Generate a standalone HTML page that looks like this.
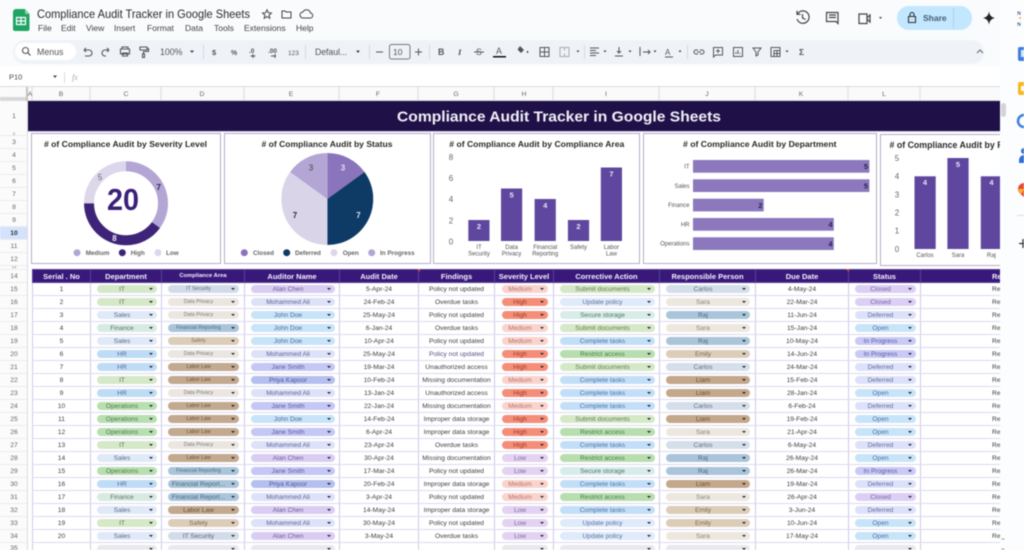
<!DOCTYPE html>
<html><head><meta charset="utf-8"><title>Compliance Audit Tracker in Google Sheets</title>
<style>
html,body{margin:0;padding:0;width:1024px;height:550px;overflow:hidden;background:#fff;font-family:"Liberation Sans",sans-serif}
#r{position:absolute;left:0;top:0;width:1024px;height:550px;overflow:hidden;filter:blur(.5px);background:#fff}
svg{position:absolute;left:0;top:0}
#top{position:absolute;left:0;top:0;width:1024px;height:66px;background:#f9fbfd}
#fx{position:absolute;left:0;top:66px;width:1000px;height:21px;background:#fff}
#ban{position:absolute;left:28px;top:101px;width:972px;height:30px;background:#1f1147}
table{position:absolute;left:32px;top:269px;border-collapse:collapse;table-layout:fixed;width:968px}
tr{height:13px}
td{padding:0;border:1px solid #dedaf0;border-left-color:#cfc9e8;border-right-color:#cfc9e8;font-size:6.7px;line-height:11px;height:12px;text-align:center;overflow:hidden;white-space:nowrap;color:#3f3f3f;box-sizing:border-box}
tr:first-child td{background:#38197a;color:#f4f0ff;font-weight:bold;font-size:7.5px;border-color:#5a3f96}
td:last-child{text-align:left;padding-left:71px}
.p{display:block;position:relative;height:8.5px;line-height:9px;border-radius:4.25px;padding-right:10px;box-sizing:border-box;font-style:normal;overflow:hidden;font-size:6.6px}
.p::after{content:"";position:absolute;right:4.5px;top:3px;border-left:2px solid transparent;border-right:2px solid transparent;border-top:2.6px solid #223}
td:nth-child(2) .p{margin-left:6px;width:60px}
td:nth-child(3) .p{margin-left:6px;width:71px;font-size:5.2px;line-height:9.5px}
td:nth-child(3) .l{font-size:6.6px;line-height:9px}
td:nth-child(4) .p{margin-left:6px;width:84px}
td:nth-child(7) .p{margin-left:7px;width:46px}
td:nth-child(8) .p{margin-left:6px;width:95px}
td:nth-child(9) .p{margin-left:6px;width:84px}
td:nth-child(11) .p{margin-left:6px;width:61px}
.a1{background:#d5e8c8;color:#64775a}.a2{background:#dfe9f8;color:#5b6a85}.a3{background:#d8ebe3;color:#5f7268}.a4{background:#bfdcf6;color:#52709a}.a5{background:#b7dfb0;color:#557a55}
.b1{background:#d2dce8;color:#5d6878}.b2{background:#ebe7e0;color:#777}.b3{background:#aac5da;color:#4f6a80}.b4{background:#dccdb9;color:#7c6c58}.b5{background:#c2a98f;color:#6a543e}
.c1{background:#dacdf4;color:#6c5c96}.c2{background:#dde2f8;color:#5f6896}.c3{background:#c8e4f8;color:#4f6c96}.c4{background:#c5c7f4;color:#5b5c9c}.c5{background:#b5c0ee;color:#4f5a96}
.d1{background:#fad3cd;color:#b5766c}.d2{background:#f58e78;color:#a03c28}.d3{background:#e3d2f2;color:#7c6a9c}
.e1{background:#d5e8c8;color:#64804f}.e2{background:#dfeafa;color:#5b72a0}.e3{background:#d8ecea;color:#4f7468}.e4{background:#c3dff8;color:#4f72a4}.e5{background:#b8deb0;color:#4c7c4c}
.f1{background:#d4dfe9;color:#62707e}.f2{background:#ece8e0;color:#8a8578}.f3{background:#aac5da;color:#4f6a80}.f4{background:#dccdb9;color:#7c6c58}.f5{background:#c4a88c;color:#6a543e}
.g1{background:#dccff5;color:#7464a4}.g2{background:#dde2fa;color:#5f6a9c}.g3{background:#c8e4f8;color:#4f72a4}.g4{background:#c9caf5;color:#5b5ca4}
.z{background:#e8e9ec}
#side{position:absolute;left:1000px;top:0;width:24px;height:550px;background:#fcfdfe}
</style></head><body><div id="r">
<div id="top"></div><div id="fx"></div>

<svg width="1024" height="550" viewBox="0 0 1024 550" font-family="'Liberation Sans',sans-serif">
<rect x="0" y="86" width="1000" height="15" fill="#fafafa"/>
<rect x="0" y="101" width="28" height="449" fill="#fbfbfb"/>
<rect x="0" y="226" width="28" height="13" fill="#d3e3fd"/>
<path d="M0 86.500H1000M0 100.500H1000M27.500 87V550M32 87V101M90 87V101M161 87V101M244 87V101M339 87V101M418 87V101M494 87V101M553 87V101M659 87V101M755 87V101M848 87V101M920 87V101" stroke="#dcdcdc" stroke-width="1" fill="none"/>
<rect x="0" y="97" width="27" height="3" fill="#d8d8d8"/><rect x="26" y="87" width="2" height="14" fill="#c4c4c4"/>
<g font-size="6.800" fill="#666" text-anchor="middle">
<text x="30" y="96">A</text><text x="61" y="96">B</text><text x="126" y="96">C</text><text x="202" y="96">D</text><text x="291" y="96">E</text><text x="378" y="96">F</text><text x="456" y="96">G</text><text x="524" y="96">H</text><text x="606" y="96">I</text><text x="707" y="96">J</text><text x="801" y="96">K</text><text x="884" y="96">L</text>
<text x="14" y="118">1</text><text x="14" y="135" font-size="4">2</text>
<text x="14" y="144">3</text><text x="14" y="157">4</text><text x="14" y="170">5</text><text x="14" y="183">6</text><text x="14" y="196">7</text><text x="14" y="209">8</text><text x="14" y="222">9</text><text x="14" y="235" font-weight="bold" fill="#333">10</text><text x="14" y="248">11</text><text x="14" y="261">12</text><text x="14" y="268" font-size="4">13</text>
<text x="14" y="278">14</text><text x="14" y="291">15</text><text x="14" y="304">16</text><text x="14" y="317">17</text><text x="14" y="330">18</text><text x="14" y="343">19</text><text x="14" y="356">20</text><text x="14" y="369">21</text><text x="14" y="382">22</text><text x="14" y="395">23</text><text x="14" y="408">24</text><text x="14" y="421">25</text><text x="14" y="434">26</text><text x="14" y="447">27</text><text x="14" y="460">28</text><text x="14" y="473">29</text><text x="14" y="486">30</text><text x="14" y="499">31</text><text x="14" y="512">32</text><text x="14" y="525">33</text><text x="14" y="538">34</text><text x="14" y="550">35</text>
</g>
<path d="M0 135.500H27M0 148.500H27M0 161.500H27M0 174.500H27M0 187.500H27M0 200.500H27M0 213.500H27M0 226.500H27M0 239.500H27M0 252.500H27M0 265.500H27M0 269.500H27M0 282.500H27M0 295.500H27M0 308.500H27M0 321.500H27M0 334.500H27M0 347.500H27M0 360.500H27M0 373.500H27M0 386.500H27M0 399.500H27M0 412.500H27M0 425.500H27M0 438.500H27M0 451.500H27M0 464.500H27M0 477.500H27M0 490.500H27M0 503.500H27M0 516.500H27M0 529.500H27M0 542.500H27" stroke="#ececec" fill="none"/>
</svg>

<div id="ban"></div>

<table>
<colgroup><col style="width:58px"><col style="width:71px"><col style="width:83px"><col style="width:95px"><col style="width:79px"><col style="width:76px"><col style="width:59px"><col style="width:106px"><col style="width:96px"><col style="width:93px"><col style="width:72px"><col style="width:80px"></colgroup>
<tr><td>Serial . No</td><td>Department</td><td style="font-size:5.8px">Compliance Area</td><td>Auditor Name</td><td>Audit Date</td><td>Findings</td><td>Severity Level</td><td>Corrective Action</td><td>Responsible Person</td><td>Due Date</td><td>Status</td><td>Re</td></tr>
<tr><td>1</td><td><i class="p a1">IT</i></td><td><i class="p b1">IT Security</i></td><td><i class="p c1">Alan Chen</i></td><td>5-Apr-24</td><td>Policy not updated</td><td><i class="p d1">Medium</i></td><td><i class="p e1">Submit documents</i></td><td><i class="p f1">Carlos</i></td><td>4-May-24</td><td><i class="p g1">Closed</i></td><td>Re</td></tr>
<tr><td>2</td><td><i class="p a1">IT</i></td><td><i class="p b2">Data Privacy</i></td><td><i class="p c2">Mohammed Ali</i></td><td>24-Feb-24</td><td>Overdue tasks</td><td><i class="p d2">High</i></td><td><i class="p e2">Update policy</i></td><td><i class="p f2">Sara</i></td><td>22-Mar-24</td><td><i class="p g1">Closed</i></td><td>Re</td></tr>
<tr><td>3</td><td><i class="p a2">Sales</i></td><td><i class="p b2">Data Privacy</i></td><td><i class="p c3">John Doe</i></td><td>25-May-24</td><td>Policy not updated</td><td><i class="p d2">High</i></td><td><i class="p e3">Secure storage</i></td><td><i class="p f3">Raj</i></td><td>11-Jun-24</td><td><i class="p g2">Deferred</i></td><td>Re</td></tr>
<tr><td>4</td><td><i class="p a3">Finance</i></td><td><i class="p b3">Financial Reporting</i></td><td><i class="p c3">John Doe</i></td><td>6-Jan-24</td><td>Overdue tasks</td><td><i class="p d1">Medium</i></td><td><i class="p e1">Submit documents</i></td><td><i class="p f2">Sara</i></td><td>15-Jan-24</td><td><i class="p g3">Open</i></td><td>Re</td></tr>
<tr><td>5</td><td><i class="p a2">Sales</i></td><td><i class="p b4">Safety</i></td><td><i class="p c3">John Doe</i></td><td>10-Apr-24</td><td>Policy not updated</td><td><i class="p d1">Medium</i></td><td><i class="p e4">Complete tasks</i></td><td><i class="p f3">Raj</i></td><td>10-May-24</td><td><i class="p g4">In Progress</i></td><td>Re</td></tr>
<tr><td>6</td><td><i class="p a4">HR</i></td><td><i class="p b2">Data Privacy</i></td><td><i class="p c2">Mohammed Ali</i></td><td>25-May-24</td><td style="color:#5c4f86">Policy not updated</td><td><i class="p d2">High</i></td><td><i class="p e5">Restrict access</i></td><td><i class="p f4">Emily</i></td><td>14-Jun-24</td><td><i class="p g4">In Progress</i></td><td>Re</td></tr>
<tr><td>7</td><td><i class="p a4">HR</i></td><td><i class="p b5">Labor Law</i></td><td><i class="p c4">Jane Smith</i></td><td>19-Mar-24</td><td>Unauthorized access</td><td><i class="p d2">High</i></td><td><i class="p e1">Submit documents</i></td><td><i class="p f1">Carlos</i></td><td>24-Mar-24</td><td><i class="p g2">Deferred</i></td><td>Re</td></tr>
<tr><td>8</td><td><i class="p a1">IT</i></td><td><i class="p b5">Labor Law</i></td><td><i class="p c5">Priya Kapoor</i></td><td>10-Feb-24</td><td>Missing documentation</td><td><i class="p d1">Medium</i></td><td><i class="p e4">Complete tasks</i></td><td><i class="p f5">Liam</i></td><td>15-Feb-24</td><td><i class="p g2">Deferred</i></td><td>Re</td></tr>
<tr><td>9</td><td><i class="p a4">HR</i></td><td><i class="p b2">Data Privacy</i></td><td><i class="p c2">Mohammed Ali</i></td><td>13-Jan-24</td><td>Unauthorized access</td><td><i class="p d2">High</i></td><td><i class="p e4">Complete tasks</i></td><td><i class="p f5">Liam</i></td><td>28-Jan-24</td><td><i class="p g3">Open</i></td><td>Re</td></tr>
<tr><td>10</td><td><i class="p a5">Operations</i></td><td><i class="p b5">Labor Law</i></td><td><i class="p c4">Jane Smith</i></td><td>22-Jan-24</td><td>Missing documentation</td><td><i class="p d1">Medium</i></td><td><i class="p e4">Complete tasks</i></td><td><i class="p f1">Carlos</i></td><td>6-Feb-24</td><td><i class="p g2">Deferred</i></td><td>Re</td></tr>
<tr><td>11</td><td><i class="p a5">Operations</i></td><td><i class="p b5">Labor Law</i></td><td><i class="p c3">John Doe</i></td><td>14-Feb-24</td><td>Improper data storage</td><td><i class="p d2">High</i></td><td><i class="p e1">Submit documents</i></td><td><i class="p f5">Liam</i></td><td>19-Feb-24</td><td><i class="p g3">Open</i></td><td>Re</td></tr>
<tr><td>12</td><td><i class="p a5">Operations</i></td><td><i class="p b5">Labor Law</i></td><td><i class="p c4">Jane Smith</i></td><td>6-Apr-24</td><td>Improper data storage</td><td><i class="p d2">High</i></td><td><i class="p e5">Restrict access</i></td><td><i class="p f2">Sara</i></td><td>21-Apr-24</td><td><i class="p g3">Open</i></td><td>Re</td></tr>
<tr><td>13</td><td><i class="p a1">IT</i></td><td><i class="p b2">Data Privacy</i></td><td><i class="p c2">Mohammed Ali</i></td><td>23-Apr-24</td><td>Overdue tasks</td><td><i class="p d2">High</i></td><td><i class="p e4">Complete tasks</i></td><td><i class="p f1">Carlos</i></td><td>6-May-24</td><td><i class="p g2">Deferred</i></td><td>Re</td></tr>
<tr><td>14</td><td><i class="p a2">Sales</i></td><td><i class="p b5">Labor Law</i></td><td><i class="p c1">Alan Chen</i></td><td>30-Apr-24</td><td>Missing documentation</td><td><i class="p d3">Low</i></td><td><i class="p e5">Restrict access</i></td><td><i class="p f3">Raj</i></td><td>26-May-24</td><td><i class="p g3">Open</i></td><td>Re</td></tr>
<tr><td>15</td><td><i class="p a5">Operations</i></td><td><i class="p b3">Financial Reporting</i></td><td><i class="p c4">Jane Smith</i></td><td>17-Mar-24</td><td>Policy not updated</td><td><i class="p d3">Low</i></td><td><i class="p e3">Secure storage</i></td><td><i class="p f3">Raj</i></td><td>26-Mar-24</td><td><i class="p g4">In Progress</i></td><td>Re</td></tr>
<tr><td>16</td><td><i class="p a4">HR</i></td><td><i class="p b3 l">Financial Report...</i></td><td><i class="p c5">Priya Kapoor</i></td><td>20-Feb-24</td><td>Improper data storage</td><td><i class="p d1">Medium</i></td><td><i class="p e4">Complete tasks</i></td><td><i class="p f5">Liam</i></td><td>19-Mar-24</td><td><i class="p g2">Deferred</i></td><td>Re</td></tr>
<tr><td>17</td><td><i class="p a3">Finance</i></td><td><i class="p b3 l">Financial Report...</i></td><td><i class="p c2">Mohammed Ali</i></td><td>3-Apr-24</td><td>Policy not updated</td><td><i class="p d1">Medium</i></td><td><i class="p e5">Restrict access</i></td><td><i class="p f2">Sara</i></td><td>26-Apr-24</td><td><i class="p g1">Closed</i></td><td>Re</td></tr>
<tr><td>18</td><td><i class="p a2">Sales</i></td><td><i class="p b5 l">Labor Law</i></td><td><i class="p c1">Alan Chen</i></td><td>14-May-24</td><td>Improper data storage</td><td><i class="p d3">Low</i></td><td><i class="p e4">Complete tasks</i></td><td><i class="p f4">Emily</i></td><td>3-Jun-24</td><td><i class="p g2">Deferred</i></td><td>Re</td></tr>
<tr><td>19</td><td><i class="p a1">IT</i></td><td><i class="p b4 l">Safety</i></td><td><i class="p c2">Mohammed Ali</i></td><td>30-May-24</td><td>Policy not updated</td><td><i class="p d3">Low</i></td><td><i class="p e2">Update policy</i></td><td><i class="p f4">Emily</i></td><td>10-Jun-24</td><td><i class="p g3">Open</i></td><td>Re</td></tr>
<tr><td>20</td><td><i class="p a2">Sales</i></td><td><i class="p b1 l">IT Security</i></td><td><i class="p c1">Alan Chen</i></td><td>3-May-24</td><td>Overdue tasks</td><td><i class="p d3">Low</i></td><td><i class="p e2">Update policy</i></td><td><i class="p f2">Sara</i></td><td>17-May-24</td><td><i class="p g3">Open</i></td><td>Re</td></tr>
<tr><td></td><td><i class="p z"></i></td><td><i class="p z"></i></td><td><i class="p z"></i></td><td></td><td></td><td><i class="p z"></i></td><td><i class="p z"></i></td><td><i class="p z"></i></td><td></td><td><i class="p z"></i></td><td></td></tr>
</table>

<svg width="1024" height="550" viewBox="0 0 1024 550" font-family="'Liberation Sans',sans-serif">
<path d="M13 12a3 3 0 0 1 3-3h9l4.500 5v15a2 2 0 0 1-2 2H15a2 2 0 0 1-2-2z" fill="#1fa463"/>
<path d="M25 9l4.500 5H25z" fill="#8fd0ae"/>
<path d="M16.500 17.500h9v7h-9zM16.500 21h9M21 17.500v7" fill="none" stroke="#fff" stroke-width="1.200"/>
<text x="37" y="18" font-size="12" fill="#2b2b2b" textLength="213" lengthAdjust="spacingAndGlyphs">Compliance Audit Tracker in Google Sheets</text>
<path d="M267 9.800l1.300 2.900 3.100.3-2.300 2.100.7 3.100-2.800-1.600-2.800 1.600.7-3.100-2.300-2.100 3.100-.3z" fill="none" stroke="#444" stroke-width="1"/>
<path d="M282 11h3l1 1h5v6h-9z" fill="none" stroke="#444" stroke-width="1"/>
<path d="M303 18h7a2.500 2.500 0 0 0 .5-5 4 4 0 0 0-7.500-1 3 3 0 0 0 0 6z" fill="none" stroke="#444" stroke-width="1"/>
<g font-size="8.500" fill="#444"><text x="38" y="31">File</text><text x="61" y="31">Edit</text><text x="86" y="31">View</text><text x="114" y="31">Insert</text><text x="147" y="31">Format</text><text x="185" y="31">Data</text><text x="214" y="31">Tools</text><text x="244" y="31">Extensions</text><text x="296" y="31">Help</text></g>
<rect x="13" y="40" width="971" height="24" rx="12" fill="#eff3f8"/>
<rect x="15" y="43" width="61" height="17" rx="8.500" fill="#fff"/>
<circle cx="25.500" cy="50.500" r="3" fill="none" stroke="#555" stroke-width="1.100"/><path d="M27.800 52.800l2.700 2.700" stroke="#555" stroke-width="1.200"/>
<g font-size="8.800" fill="#555">
<text x="37" y="55">Menus</text>
<text x="160" y="55">100%</text>
<text x="315" y="55" textLength="32">Defaul...</text>
<text x="393" y="55" font-size="8.500">10</text>
<text x="212" y="55" font-weight="bold" font-size="7.500">$</text>
<text x="231" y="55" font-weight="bold" font-size="7">%</text>
<text x="249" y="53" font-weight="bold" font-size="6.500">.0</text>
<text x="268" y="53" font-weight="bold" font-size="6.500">.00</text>
<text x="288" y="55" font-size="6.500">123</text>
<text x="438" y="55" font-weight="bold">B</text>
<text x="458" y="55" font-style="italic" font-weight="bold" font-family="'Liberation Serif',serif">I</text>
<text x="476" y="55">S</text>
<text x="496" y="54">A</text>
<text x="799" y="55" font-size="8.500" font-weight="bold">Σ</text>
</g>
<path d="M474 52h10" stroke="#555"/><rect x="493" y="56" width="13" height="1.500" fill="#111"/>
<path d="M84 50h5a3 3 0 0 1 0 6h-4M84 50l2-2M84 50l2 2" fill="none" stroke="#555" stroke-width="1.100"/>
<path d="M109 50h-4a3 3 0 0 0 0 6h1M109 50l-2-2M109 50l-2 2" fill="none" stroke="#555" stroke-width="1.100"/>
<path d="M122 49v-2h6v2M120.500 49h9v5h-9zM122.500 53h5v3h-5z" fill="none" stroke="#555" stroke-width="1.100"/>
<path d="M140 47h7v3h-7zM147 48.500h1.500v3h-5v2M142.500 54h2v3.500h-2z" fill="none" stroke="#555" stroke-width="1.100"/>
<path d="M190 50.500h4l-2 2.500zM356 50.500h4l-2 2.500zM961 16.500h4l-2 2.500zM53 75.500h4l-2 2.500zM879 17h3l-1.500 2zM576.500 50.500h3l-1.500 2zM603.500 50.500h3l-1.500 2zM628.500 50.500h3l-1.500 2zM653.500 50.500h3l-1.500 2zM678.500 50.500h3l-1.500 2zM785.500 50.500h3l-1.500 2z" fill="#444"/>
<path d="M203.500 45v14M305.500 45v14M369.500 45v14M429.500 45v14M584.500 45v14M687.500 45v14" stroke="#d6dae0"/>
<rect x="389.500" y="44.500" width="20.500" height="14.500" rx="2" fill="none" stroke="#777"/>
<path d="M376 52h7M415 52h7M418.500 48.500v7M250.500 56h5M253 54v4M271 56h5M275 54v4" stroke="#555" stroke-width="1"/>
<path d="M520 46l4 4-3 3-3.500-3.500zM526.500 52a1 1 0 0 0 2 0l-1-1.500z" fill="#555"/>
<path d="M540 47.500h9v9h-9zM544.500 47.500v9M540 52h9" fill="none" stroke="#555"/>
<path d="M560 47.500h9v9h-9zM564.500 47.500v3M564.500 53.500v3" fill="none" stroke="#aaa"/>
<path d="M590 48h9M590 50.500h6M590 53h9M590 55.500h6" stroke="#555"/>
<path d="M615 56h8M619 47v6M617 51l2 2 2-2" fill="none" stroke="#555"/>
<path d="M640 47v9M643 52h7M648 50l2 2-2 2" fill="none" stroke="#555"/>
<text x="665" y="55" font-size="8" fill="#555">A</text><path d="M665 57h8" stroke="#555"/>
<path d="M698 50h-2a2 2 0 0 0 0 4h2M700 50h2a2 2 0 0 1 0 4h-2M697 52h4" fill="none" stroke="#555"/>
<path d="M713.500 47.500h9v7.500h-7l-2 2zM718 49v4M716 51h4" fill="none" stroke="#555"/>
<path d="M733.500 47.500h9v9h-9zM736 54v-2M738 54v-4M740 54v-1" fill="none" stroke="#555"/>
<path d="M753 48h8l-3 4v3l-2 1v-4z" fill="none" stroke="#555"/>
<path d="M771 47.500h9v9h-9zM774 50.500h6M774 53.500h6M774 50.500v6M777 50.500v6" fill="none" stroke="#555"/>
<path d="M977 53l3-3 3 3" fill="none" stroke="#666"/>
<path d="M797.500 14a6.200 6.200 0 1 1-.500 5M797 10.800v3.500h3.500M802.500 14v4l3 1.500" fill="none" stroke="#444" stroke-width="1.200"/>
<path d="M826.500 12.500h11.500v11l-2-2h-9.500zM829 15h7M829 17.500h7" fill="none" stroke="#444" stroke-width="1.200"/>
<path d="M859 14h8v9.500h-8zM867 18l3-3v7l-3-3z" fill="none" stroke="#444" stroke-width="1.200"/>
<rect x="897" y="6" width="75" height="24" rx="12" fill="#c2e7ff"/>
<path d="M953.500 8v20" stroke="#a9d4ef"/>
<path d="M908.500 16.500h7v6h-7zM910 16.500v-2a2 2 0 0 1 4 0v2" fill="none" stroke="#333" stroke-width="1.100"/>
<text x="923" y="21" font-size="8.500" fill="#2f4558" font-weight="bold" opacity=".85">Share</text>
<path d="M989 11.500c.8 4 2 5.500 6 6.500-4 1-5.200 2.500-6 6.500-.8-4-2-5.500-6-6.500 4-1 5.200-2.500 6-6.500z" fill="#222"/>
<text x="9" y="79.500" font-size="7.500" fill="#444">P10</text><path d="M64.500 72v11" stroke="#ddd"/>
<text x="72" y="80" font-size="8" font-style="italic" fill="#aaa" font-family="'Liberation Serif',serif">fx</text>
<text x="397" y="121.500" font-size="15" font-weight="bold" fill="#f2f0f8" textLength="324" lengthAdjust="spacingAndGlyphs">Compliance Audit Tracker in Google Sheets</text>
<rect x="28" y="131" width="972" height="138" fill="#fff"/>
<path d="M28 131.500H1000" stroke="#cfc9e6"/>
<path d="M417 269l3 0v3z" fill="#e0533f"/><path d="M846 269h3v3z" fill="#e0533f"/>
<g fill="#fff" stroke="#b3adcc" stroke-width="1">
<rect x="31.500" y="133.500" width="189" height="130"/><rect x="224.500" y="133.500" width="206" height="130"/><rect x="433.500" y="133.500" width="206" height="130"/><rect x="643.500" y="133.500" width="233" height="130"/><rect x="880.500" y="134.500" width="130" height="131"/>
</g>
<g font-size="8.500" font-weight="bold" fill="#2a2a2a">
<text x="44" y="147" textLength="163" lengthAdjust="spacingAndGlyphs"># of Compliance Audit by Severity Level</text>
<text x="261.500" y="147" textLength="131" lengthAdjust="spacingAndGlyphs"># of Compliance Audit by Status</text>
<text x="449.300" y="147" textLength="175" lengthAdjust="spacingAndGlyphs"># of Compliance Audit by Compliance Area</text>
<text x="683" y="147" textLength="153.500" lengthAdjust="spacingAndGlyphs"># of Compliance Audit by Department</text>
<text x="889.500" y="148" font-size="8.800"># of Compliance Audit by Responsible Person</text>
</g>
<g fill="none" stroke-width="10" transform="rotate(-90 126 203.300)">
<circle cx="126" cy="203.300" r="37" pathLength="20" stroke="#b3a5d4" stroke-dasharray="7 13"/>
<circle cx="126" cy="203.300" r="37" pathLength="20" stroke="#3d2478" stroke-dasharray="8 12" stroke-dashoffset="-7"/>
<circle cx="126" cy="203.300" r="37" pathLength="20" stroke="#dcd7ea" stroke-dasharray="5 15" stroke-dashoffset="-15"/>
</g>
<text x="107" y="210" font-size="31" font-weight="bold" fill="#3a2078" textLength="32" lengthAdjust="spacingAndGlyphs">20</text>
<g font-size="8" text-anchor="middle"><text x="158.700" y="190" font-weight="bold" fill="#2a2a4a">7</text><text x="114.500" y="241" font-weight="bold" fill="#eee">8</text><text x="100" y="180" fill="#666">5</text></g>
<g font-size="6.300" font-weight="bold" fill="#666">
<circle cx="77" cy="252.700" r="3.500" fill="#b3a5d4"/><text x="85.700" y="255">Medium</text>
<circle cx="122.300" cy="252.700" r="3.500" fill="#3d2478"/><text x="130.700" y="255">High</text>
<circle cx="158" cy="252.700" r="3.500" fill="#dcd7ea"/><text x="166" y="255">Low</text>
<circle cx="244.300" cy="252.700" r="3.500" fill="#8a74bb"/><text x="253" y="255">Closed</text>
<circle cx="286.700" cy="252.700" r="3.500" fill="#0e3a66"/><text x="295" y="255">Deferred</text>
<circle cx="334" cy="252.700" r="3.500" fill="#dcd7ea"/><text x="342.700" y="255">Open</text>
<circle cx="371.700" cy="252.700" r="3.500" fill="#b3a5d4"/><text x="380" y="255">In Progress</text>
</g>
<path d="M327.300 199V153A46 46 0 0 1 364.500 172z" fill="#8a74bb"/>
<path d="M327.300 199L364.500 172A46 46 0 0 1 327.300 245z" fill="#0e3a66"/>
<path d="M327.300 199V245A46 46 0 0 1 290.100 172z" fill="#d9d4e8"/>
<path d="M327.300 199L290.100 172A46 46 0 0 1 327.300 153z" fill="#b3a5d4"/>
<g font-size="8" text-anchor="middle"><text x="343" y="170.500" font-weight="bold" fill="#e8e0f5">3</text><text x="358.500" y="218" font-weight="bold" fill="#dfe4ee">7</text><text x="295" y="218" font-weight="bold" fill="#2a2a3a">7</text><text x="311" y="170.500" fill="#444">3</text></g>
<g fill="#5f479f">
<rect x="468.300" y="220" width="21.200" height="21"/><rect x="501" y="188.500" width="21.200" height="52.500"/><rect x="534.600" y="199" width="21.200" height="42"/><rect x="567.900" y="220" width="21.200" height="21"/><rect x="600.800" y="167.500" width="21.200" height="73.500"/>
</g>
<g font-size="7.500" font-weight="bold" fill="#eae4f6" text-anchor="middle"><text x="479" y="229">2</text><text x="511.600" y="197.500">5</text><text x="545.200" y="208">4</text><text x="578.500" y="229">2</text><text x="611.400" y="176.500">7</text></g>
<g font-size="8" fill="#666" text-anchor="middle"><text x="451" y="160">8</text><text x="451" y="181">6</text><text x="451" y="202">4</text><text x="451" y="223.500">2</text><text x="451" y="244.500">0</text></g>
<g font-size="6" fill="#555" text-anchor="middle">
<text x="479" y="249">IT</text><text x="479" y="255.500">Security</text>
<text x="511.600" y="249">Data</text><text x="511.600" y="255.500">Privacy</text>
<text x="545.200" y="249">Financial</text><text x="545.200" y="255.500">Reporting</text>
<text x="578.500" y="249">Safety</text>
<text x="611.400" y="249">Labor</text><text x="611.400" y="255.500">Law</text>
</g>
<g fill="#8b78bd">
<rect x="693" y="160" width="176.400" height="12.700"/><rect x="693" y="179.300" width="176.400" height="12.700"/><rect x="693" y="198.700" width="70.700" height="12.700"/><rect x="693" y="218" width="140.800" height="12.700"/><rect x="693" y="237.300" width="140.800" height="12.700"/>
</g>
<g font-size="7.500" font-weight="bold" fill="#2a2350" text-anchor="end"><text x="868" y="169">5</text><text x="868" y="188.500">5</text><text x="762.500" y="208">2</text><text x="832.500" y="227">4</text><text x="832.500" y="246.500">4</text></g>
<g font-size="6" fill="#555" text-anchor="end"><text x="689.500" y="168.500">IT</text><text x="689.500" y="188">Sales</text><text x="689.500" y="207">Finance</text><text x="689.500" y="226.500">HR</text><text x="689.500" y="245.500">Operations</text></g>
<g fill="#5f479f"><rect x="914.500" y="176.300" width="21.200" height="72.700"/><rect x="947.400" y="158" width="21.200" height="91"/><rect x="980.800" y="176.300" width="21.200" height="72.700"/></g>
<g font-size="7.500" font-weight="bold" fill="#eae4f6" text-anchor="middle"><text x="925" y="185">4</text><text x="958" y="167">5</text><text x="991.400" y="185">4</text></g>
<g font-size="8" fill="#666" text-anchor="middle"><text x="897" y="161">5</text><text x="897" y="179">4</text><text x="897" y="197.500">3</text><text x="897" y="215.500">2</text><text x="897" y="233.500">1</text><text x="897" y="252">0</text></g>
<g font-size="6" fill="#555" text-anchor="middle"><text x="925" y="257">Carlos</text><text x="958" y="257">Sara</text><text x="991.400" y="257">Raj</text></g>
</svg>

<div id="side"></div>
<svg width="1024" height="550" viewBox="0 0 1024 550" font-family="'Liberation Serif',serif">
<rect x="1001" y="103" width="5" height="14" rx="2.500" fill="#d4d4d8"/>
<text x="1017" y="15" font-size="5.500" font-weight="bold" fill="#2b3f7a">N</text><circle cx="1020" cy="18" r="1" fill="#e8b23a"/><text x="1017" y="26" font-size="5.500" font-weight="bold" fill="#2b3f7a">N</text>
<rect x="1018" y="47" width="10" height="14" rx="2" fill="#3d7fe0"/><rect x="1021" y="50" width="5" height="7" fill="#d6e6fb"/>
<rect x="1018" y="82" width="10" height="13" rx="2" fill="#f6b81f"/><rect x="1021" y="86" width="5" height="5" fill="#fff"/>
<circle cx="1024" cy="121" r="6" fill="none" stroke="#3d7fe0" stroke-width="2.500"/>
<circle cx="1024" cy="151" r="3" fill="#2f6fd8"/><path d="M1019 163v-3a5 5 0 0 1 10 0v3z" fill="#2f6fd8"/>
<path d="M1024 183a6 6 0 0 0-6 6c0 4 6 8 6 8z" fill="#e9493c"/><path d="M1018.500 189c0 2 1.500 4 3 5l2.500-5z" fill="#f6b81f"/><path d="M1024 197v-8h4v8z" fill="#33a853"/>
<path d="M1017 215.500h7" stroke="#dedede"/>
<path d="M1019 243.500h6M1023 239v9" stroke="#333" stroke-width="1.300"/>
<path d="M1001.500 539h3M1001.500 549h3" stroke="#999"/>
</svg>
</div></body></html>
